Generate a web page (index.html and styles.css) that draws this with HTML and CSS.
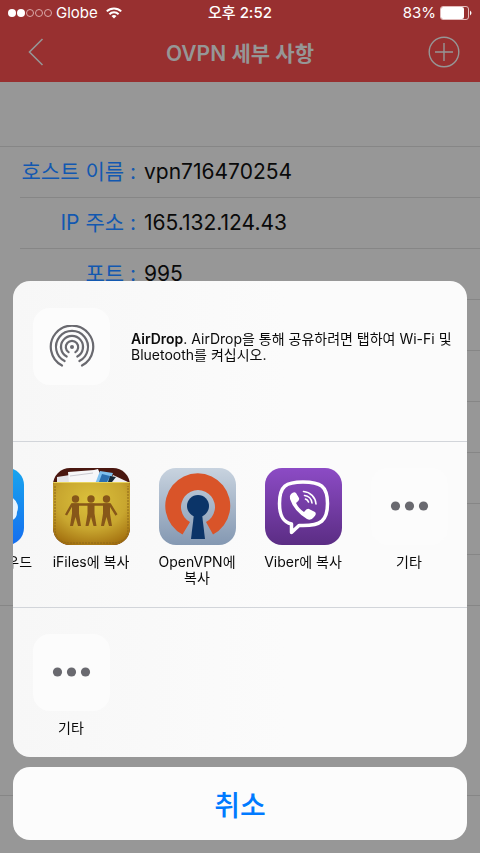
FILE: index.html
```html
<!DOCTYPE html>
<html lang="ko">
<head>
    <meta charset="UTF-8">
    <meta name="viewport" content="width=device-width, initial-scale=1.0">
    <title>OVPN 세부 사항</title>
    <link rel="stylesheet" href="styles.css">
</head>
<body>
    <header class="top">
        <div class="status-bar">
            <div class="status-left">
                <svg class="signal" width="44" height="10" viewBox="0 0 44 10" fill="none" stroke="#d9a9a9">
                    <circle cx="4" cy="5" r="4" fill="#fff" stroke="none"/>
                    <circle cx="13" cy="5" r="4" fill="#fff" stroke="none"/>
                    <circle cx="22" cy="5" r="3.5"/>
                    <circle cx="31" cy="5" r="3.5"/>
                    <circle cx="40" cy="5" r="3.5"/>
                </svg>
                <span>Globe</span>
                <svg class="wifi" width="16" height="12" viewBox="0 0 16 12" fill="none" stroke="#fff" stroke-width="2">
                    <path d="M.8 4.4a10.3 10.3 0 0 1 14.4 0"/>
                    <path d="M3.4 7.2a6.6 6.6 0 0 1 9.2 0"/>
                    <path d="M8 11.6 5.5 9.1a3.6 3.6 0 0 1 5 0z" fill="#fff" stroke="none"/>
                </svg>
            </div>
            <div class="time">오후 2:52</div>
            <div class="status-right">
                <span>83%</span>
                <svg width="32" height="14" viewBox="0 0 32 14">
                    <rect x=".5" y=".5" width="28" height="13" rx="2.5" fill="none" stroke="#e3bcbc"/>
                    <rect x="1" y="1" width="23" height="12" rx="2" fill="#fff"/>
                    <path d="M30 4.500q3 2.500 0 5z" fill="#fff"/>
                </svg>
            </div>
        </div>
        <nav class="nav-bar">
            <button class="nav-btn" aria-label="뒤로">
                <svg width="16" height="28" viewBox="0 0 16 28" fill="none" stroke="#969696" stroke-width="1.600">
                    <path d="M14.500 1 1.500 14l13 13"/>
                </svg>
            </button>
            <h1>OVPN 세부 사항</h1>
            <button class="nav-btn" aria-label="추가">
                <svg width="32" height="32" viewBox="0 0 32 32" fill="none" stroke="#969696" stroke-width="1.400">
                    <circle cx="16" cy="16" r="14.800"/>
                    <path d="M16 7v18M7 16h18"/>
                </svg>
            </button>
        </nav>
    </header>

    <main class="details">
        <dl class="rows">
            <div class="row"><dt>호스트 이름 :</dt><dd>vpn716470254</dd></div>
            <div class="row"><dt>IP 주소 :</dt><dd>165.132.124.43</dd></div>
            <div class="row"><dt>포트 :</dt><dd>995</dd></div>
            <div class="row"></div>
            <div class="row"></div>
            <div class="row"></div>
            <div class="row"></div>
            <div class="row"></div>
            <div class="row"></div>
        </dl>
        <div class="spacer"></div>
    </main>

    <div class="sheet">
        <div class="panel">
            <section class="airdrop">
                <button class="tile" aria-label="AirDrop">
                    <svg width="46" height="44" viewBox="0 0 46 44" fill="none" stroke="#69696f" stroke-width="2.200" stroke-linecap="round">
                        <circle cx="23" cy="22" r="2" fill="#69696f" stroke="none"/>
                        <path d="M19.600 27.200A6.200 6.200 0 1 1 26.400 27.200"/>
                        <path d="M17.700 31.500A11 11 0 1 1 28.300 31.500"/>
                        <path d="M15.600 36.100A16 16 0 1 1 30.400 36.100"/>
                        <path d="M13 40.500A21.200 21.200 0 1 1 33 40.500"/>
                    </svg>
                </button>
                <p><b>AirDrop</b>. AirDrop을 통해 공유하려면 탭하여 Wi-Fi 및 Bluetooth를 켜십시오.</p>
            </section>

            <section class="apps">
                <button class="app">
                    <svg class="icon" viewBox="0 0 77 77">
                        <defs>
                            <linearGradient id="cloud" x1="0" y1="0" x2="0" y2="1">
                                <stop offset="0" stop-color="#19a5ee"/>
                                <stop offset="1" stop-color="#156ef0"/>
                            </linearGradient>
                        </defs>
                        <rect width="77" height="77" rx="17" fill="url(#cloud)"/>
                        <path d="M20 53a12 12 0 0 1 0-23 17 17 0 0 1 33 1 11 11 0 0 1 17 13q0 9-10 9z" fill="#e8f3fd"/>
                    </svg>
                    <span>네이버 클라우드</span>
                </button>
                <button class="app">
                    <svg class="icon" viewBox="0 0 77 77">
                        <defs>
                            <clipPath id="round"><rect width="77" height="77" rx="17"/></clipPath>
                            <radialGradient id="gold" cx=".5" cy=".3" r=".75">
                                <stop offset="0" stop-color="#dcc23c"/>
                                <stop offset=".6" stop-color="#c8a62f"/>
                                <stop offset="1" stop-color="#a3700f"/>
                            </radialGradient>
                        </defs>
                        <g clip-path="url(#round)">
                            <rect width="77" height="77" fill="#4a1710"/>
                            <path d="M4 9 17 7l1 8H4z" fill="#e4e4e8"/>
                            <path d="M15 4 41 2 45 1l6 14H16z" fill="#f6f6f8"/>
                            <path d="M17 8 40 5" stroke="#c9c9d0"/>
                            <path d="M47 3 60 5 56 16H42z" fill="#7fc0ee"/>
                            <path d="M49 6 57 8 54 14H46z" fill="#2c6faf"/>
                            <path d="M60 7 75 14H57z" fill="#eeeef2"/>
                            <path d="M57 8 63 9 59 14H55z" fill="#16293b"/>
                            <path d="M0 14h77v63H0z" fill="url(#gold)"/>
                            <path d="M0 14.500h77" stroke="#e8d35c"/>
                            <path d="M2 18v42q0 15 16 15h41q16 0 16-15V18" fill="none" stroke="#8f6818" stroke-dasharray="2 1"/>
                        </g>
                        <g fill="#875719">
                            <circle cx="22.500" cy="31" r="3.700"/>
                            <circle cx="38" cy="31" r="3.700"/>
                            <circle cx="53.500" cy="31" r="3.700"/>
                            <path d="M19 35.500h7v10l2 12.500h-3l-2.500-9-2.500 9h-3l2-12.500zM34.500 35.500h7v10l2 12.500h-3L38 49l-2.500 9h-3l2-12.500zM50 35.500h7v10L59 58h-3l-2.500-9-2.500 9h-3l2-12.500z"/>
                        </g>
                        <path d="M13 47 19 36.500H57L63.500 47" fill="none" stroke="#875719" stroke-width="2.400"/>
                    </svg>
                    <span>iFiles에 복사</span>
                </button>
                <button class="app">
                    <svg class="icon" viewBox="0 0 77 77">
                        <defs>
                            <linearGradient id="steel" x1="0" y1="0" x2="0" y2="1">
                                <stop offset="0" stop-color="#c8d3df"/>
                                <stop offset="1" stop-color="#8498b2"/>
                            </linearGradient>
                        </defs>
                        <rect width="77" height="77" rx="17" fill="url(#steel)"/>
                        <path d="M23.500 66.500A32.500 32.500 0 1 1 54 66.500L47 54A17 17 0 1 0 31 54z" fill="#d95429"/>
                        <circle cx="39" cy="38" r="11" fill="#0b3468"/>
                        <path d="M35 46h8l3 25H32z" fill="#0b3468"/>
                    </svg>
                    <span>OpenVPN에 복사</span>
                </button>
                <button class="app">
                    <svg class="icon" viewBox="0 0 77 77">
                        <defs>
                            <linearGradient id="violet" x1="0" y1="0" x2="0" y2="1">
                                <stop offset="0" stop-color="#8c4bc5"/>
                                <stop offset="1" stop-color="#5b2d84"/>
                            </linearGradient>
                        </defs>
                        <rect width="77" height="77" rx="17" fill="url(#violet)"/>
                        <g fill="none" stroke="#fff" stroke-linejoin="round" stroke-linecap="round">
                            <path d="M38 14C21 14 14.500 18 14.500 35.500 14.500 48 18 54 26.500 56v8.500L34 57.500H38C55.500 57.500 62.500 53 62.500 35.500S55.500 14 38 14z" stroke-width="3.500"/>
                            <path d="M38.500 23.500A13.500 13.500 0 0 1 51 36M39.500 27.500A8.500 8.500 0 0 1 47 35M40.500 31A5 5 0 0 1 43.500 34" stroke-width="1.600"/>
                        </g>
                        <path d="M26 26q3-3 5-1l3 5q1 2-3 5 3 6 8 9 3-4 5-3l6 3q2 2-1 5-3 4-7 2Q29 43 25 31q-1-3 1-5z" fill="#fff"/>
                    </svg>
                    <span>Viber에 복사</span>
                </button>
                <button class="app">
                    <svg class="icon" viewBox="0 0 77 77" fill="#69696f">
                        <rect width="77" height="77" rx="17" fill="#fcfcfc"/>
                        <circle cx="24.500" cy="38" r="4.600"/>
                        <circle cx="38.500" cy="38" r="4.600"/>
                        <circle cx="52.500" cy="38" r="4.600"/>
                    </svg>
                    <span>기타</span>
                </button>
            </section>

            <section class="actions">
                <button class="app">
                    <svg class="icon" viewBox="0 0 77 77" fill="#69696f">
                        <rect width="77" height="77" rx="17" fill="#fcfcfc"/>
                        <circle cx="24.500" cy="38" r="4.600"/>
                        <circle cx="38.500" cy="38" r="4.600"/>
                        <circle cx="52.500" cy="38" r="4.600"/>
                    </svg>
                    <span>기타</span>
                </button>
            </section>
        </div>
        <button class="cancel">취소</button>
    </div>
</body>
</html>
```
FILE: styles.css
```css
* { margin: 0; padding: 0; box-sizing: border-box; }
body {
    font-family: Inter, 'Noto Sans CJK KR', sans-serif;
    background: #979797; color: #0a0a0a;
    min-height: 100vh; overflow: hidden;
}
button { background: none; border: none; font: inherit; color: inherit; cursor: pointer; }
svg { display: block; }

.top { background: #983030; }
.status-bar {
    display: grid; grid-template-columns: 1fr auto 1fr; align-items: center;
    height: 26px; padding: 0 8px;
    color: #fff; font-size: 15px; line-height: 26px;
}
.status-left, .status-right { display: flex; align-items: center; gap: 4px; }
.status-right { justify-content: flex-end; }
.wifi { margin-left: 4px; }
.time { font-weight: 500; }
.nav-bar {
    display: flex; align-items: center; justify-content: space-between;
    height: 56px; padding: 0 20px 4px;
}
.nav-bar h1 { font-size: 21px; font-weight: 600; color: #969696; }
.nav-btn { display: flex; align-items: center; justify-content: center; width: 32px; height: 32px; }

.details { padding-top: 64px; }
.rows { border-bottom: 1px solid #868686; }
.row {
    display: grid; grid-template-columns: 136px 1fr; gap: 8px; align-items: center;
    height: 51px; font-size: 21px; line-height: 50px;
    background: linear-gradient(#868686, #868686) 20px 0 / 100% 1px no-repeat;
}
.row:first-child { background-position: 0 0; }
.row dt { text-align: right; color: #1258b0; }
.spacer { height: 190px; border-bottom: 1px solid #868686; }

/* share sheet over the dimmed page */
.sheet {
    position: fixed; left: 13px; right: 13px; bottom: 13px;
    display: flex; flex-direction: column; gap: 10px;
}
.panel {
    background: linear-gradient(90deg, #f7f7f7, #fbfbfb 60%);
    border-radius: 17px; overflow: hidden;
}
.airdrop {
    display: flex; gap: 21px; height: 161px; padding: 27px 14px 27px 20px;
    border-bottom: 1px solid #d2d5da;
}
.tile {
    display: flex; align-items: center; justify-content: center;
    flex: none; width: 77px; height: 77px;
    background: #fcfcfc; border-radius: 17px;
}
.airdrop p { padding-top: 23px; font-size: 14px; line-height: 16px; }
.airdrop b { font-weight: 600; }
.apps {
    display: flex; justify-content: flex-end;
    height: 166px; padding: 26px 5px 0 0; border-bottom: 1px solid #d2d5da;
}
.actions { display: flex; height: 149px; padding: 26px 5px 0; }
.app {
    display: flex; flex-direction: column; align-items: center; gap: 9px;
    flex: none; width: 106px; padding: 0 6px;
    font-size: 14px; line-height: 16px;
}
.app span { word-break: keep-all; }
.apps .app:first-child span { white-space: nowrap; }
.icon { width: 77px; height: 77px; }
.cancel {
    height: 73px; background: #fcfcfc; border-radius: 17px;
    color: #007aff; font-size: 28px; font-weight: 500;
}
```
